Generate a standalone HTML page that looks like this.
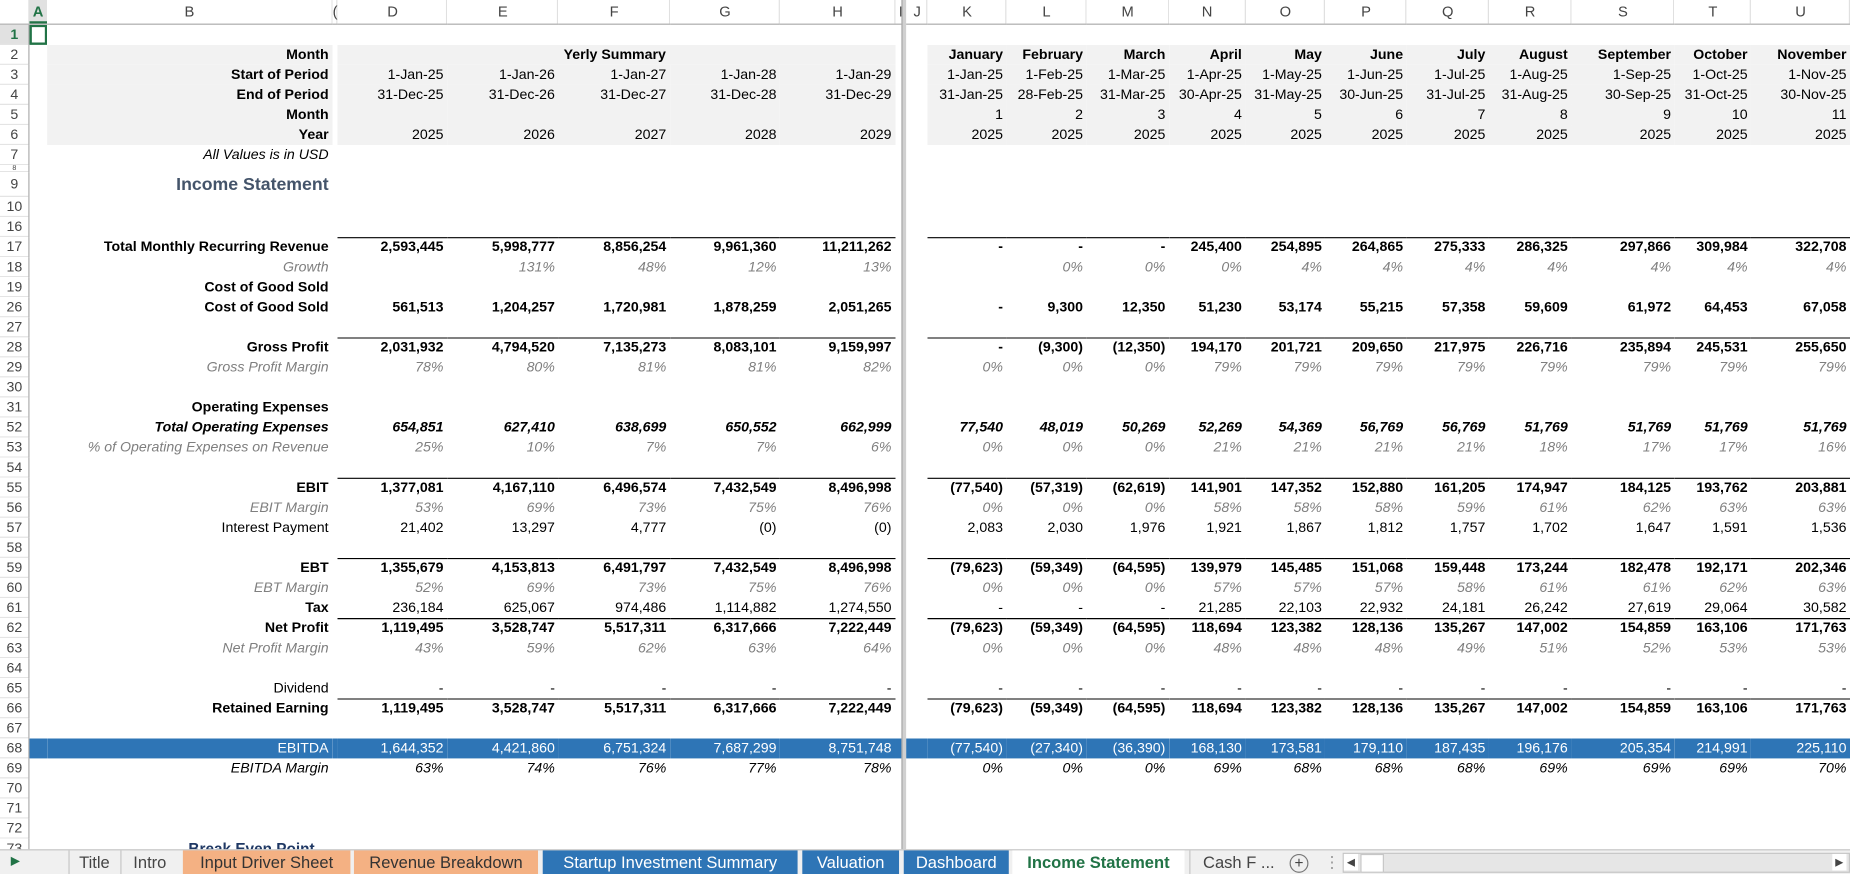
<!DOCTYPE html>
<html><head><meta charset="utf-8">
<style>
html,body{margin:0;padding:0;background:#fff;overflow:hidden;width:1850px;height:874px}
#w{position:relative;width:1568px;height:741px;overflow:hidden;transform:scale(1.17985,1.17949);transform-origin:0 0;font-family:"Liberation Sans",Arial,sans-serif;font-size:12px;color:#000}
table{border-collapse:collapse;table-layout:fixed;position:absolute;left:0;top:0}
td{padding:0 3px 0 0;text-align:right;white-space:nowrap;overflow:hidden;height:17px;line-height:17px}
td.rh{text-align:center;padding:0;color:#444;font-size:12px;border-right:1px solid #ababab;box-shadow:inset 0 -1px 0 #e4e4e4}
tr.hd td{height:20px;line-height:20px;text-align:center;padding:0;color:#444;font-size:12.5px;border-bottom:1px solid #ababab;box-shadow:inset -1px 0 0 #e0e0e0}
tr.hd td.sel{color:#217346;font-weight:bold;background:#e1e1e1;box-shadow:inset 0 -2px 0 #217346}
tr.sh td.s{background:#f2f2f2}
.b td.l,.b td.v{font-weight:bold}
.g td.l,.g td.v{color:#7f7f7f;font-style:italic}
.bi td.l,.bi td.v{font-weight:bold;font-style:italic}
.it td.l,.it td.v{font-style:italic}
.t td.v{box-shadow:inset 0 1px 0 #000}
.eb td.l,.eb td.v,.eb td.x{background:#2e75b6;color:#fff}
#fz{position:absolute;left:764px;top:0;width:3px;height:720px;background:#d0d0d0;border-left:1px solid #a8a8a8}
#tabs{position:absolute;left:0;top:720px;width:1568px;height:21px;background:#f0f0f0;border-top:1px solid #c6c6c6}
#tabs span{position:absolute;top:0;height:20px;line-height:20px;text-align:center;font-size:14px;color:#444}
.tb{background:#2e75b6;color:#fff!important}
.to{background:#f4b183;color:#333!important}
</style></head><body><div id="w">
<table>
<colgroup><col style="width:25px"><col style="width:15px"><col style="width:242px"><col style="width:5px"><col style="width:93px"><col style="width:95px"><col style="width:95px"><col style="width:94px"><col style="width:98px"><col style="width:10px"><col style="width:18px"><col style="width:67px"><col style="width:68px"><col style="width:70px"><col style="width:65px"><col style="width:68px"><col style="width:69px"><col style="width:70px"><col style="width:70px"><col style="width:88px"><col style="width:65px"><col style="width:84px"></colgroup>
<tr class="hd"><td style="background:#fff"></td><td class="sel">A</td><td>B</td><td>(</td><td>D</td><td>E</td><td>F</td><td>G</td><td>H</td><td>I</td><td>J</td><td>K</td><td>L</td><td>M</td><td>N</td><td>O</td><td>P</td><td>Q</td><td>R</td><td>S</td><td>T</td><td>U</td></tr>
<tr><td class="rh" style="background:#e1e1e1;color:#217346;font-weight:bold">1</td><td style="box-shadow:inset 0 0 0 2px #217346"></td><td></td><td></td><td></td><td></td><td></td><td></td><td></td><td></td><td></td><td></td><td></td><td></td><td></td><td></td><td></td><td></td><td></td><td></td><td></td><td></td></tr>
<tr class="sh b"><td class="rh">2</td><td></td><td class="s l">Month</td><td></td><td class="s" colspan="5" style="text-align:center;font-weight:bold">Yerly Summary</td><td></td><td></td><td class="s v">January</td><td class="s v">February</td><td class="s v">March</td><td class="s v">April</td><td class="s v">May</td><td class="s v">June</td><td class="s v">July</td><td class="s v">August</td><td class="s v">September</td><td class="s v">October</td><td class="s v">November</td></tr>
<tr class="sh"><td class="rh">3</td><td></td><td class="s" style="font-weight:bold">Start of Period</td><td></td><td class="s">1-Jan-25</td><td class="s">1-Jan-26</td><td class="s">1-Jan-27</td><td class="s">1-Jan-28</td><td class="s">1-Jan-29</td><td></td><td></td><td class="s">1-Jan-25</td><td class="s">1-Feb-25</td><td class="s">1-Mar-25</td><td class="s">1-Apr-25</td><td class="s">1-May-25</td><td class="s">1-Jun-25</td><td class="s">1-Jul-25</td><td class="s">1-Aug-25</td><td class="s">1-Sep-25</td><td class="s">1-Oct-25</td><td class="s">1-Nov-25</td></tr>
<tr class="sh"><td class="rh">4</td><td></td><td class="s" style="font-weight:bold">End of Period</td><td></td><td class="s">31-Dec-25</td><td class="s">31-Dec-26</td><td class="s">31-Dec-27</td><td class="s">31-Dec-28</td><td class="s">31-Dec-29</td><td></td><td></td><td class="s">31-Jan-25</td><td class="s">28-Feb-25</td><td class="s">31-Mar-25</td><td class="s">30-Apr-25</td><td class="s">31-May-25</td><td class="s">30-Jun-25</td><td class="s">31-Jul-25</td><td class="s">31-Aug-25</td><td class="s">30-Sep-25</td><td class="s">31-Oct-25</td><td class="s">30-Nov-25</td></tr>
<tr class="sh"><td class="rh">5</td><td></td><td class="s" style="font-weight:bold">Month</td><td></td><td class="s"></td><td class="s"></td><td class="s"></td><td class="s"></td><td class="s"></td><td></td><td></td><td class="s">1</td><td class="s">2</td><td class="s">3</td><td class="s">4</td><td class="s">5</td><td class="s">6</td><td class="s">7</td><td class="s">8</td><td class="s">9</td><td class="s">10</td><td class="s">11</td></tr>
<tr class="sh"><td class="rh">6</td><td></td><td class="s" style="font-weight:bold">Year</td><td></td><td class="s">2025</td><td class="s">2026</td><td class="s">2027</td><td class="s">2028</td><td class="s">2029</td><td></td><td></td><td class="s">2025</td><td class="s">2025</td><td class="s">2025</td><td class="s">2025</td><td class="s">2025</td><td class="s">2025</td><td class="s">2025</td><td class="s">2025</td><td class="s">2025</td><td class="s">2025</td><td class="s">2025</td></tr>
<tr><td class="rh">7</td><td></td><td style="font-style:italic">All Values is in USD</td><td colspan="19"></td></tr>
<tr><td class="rh" style="height:6px;line-height:6px;font-size:6px">8</td><td colspan="21" style="height:6px"></td></tr>
<tr><td class="rh" style="height:21px">9</td><td></td><td style="height:21px;font-weight:bold;font-size:15px;color:#44546a">Income Statement</td><td colspan="19"></td></tr>
<tr><td class="rh">10</td><td colspan="21"></td></tr>
<tr><td class="rh">16</td><td colspan="21"></td></tr>
<tr class="b t"><td class="rh">17</td><td></td><td class="l">Total Monthly Recurring Revenue</td><td></td><td class="v">2,593,445</td><td class="v">5,998,777</td><td class="v">8,856,254</td><td class="v">9,961,360</td><td class="v">11,211,262</td><td></td><td></td><td class="v">-</td><td class="v">-</td><td class="v">-</td><td class="v">245,400</td><td class="v">254,895</td><td class="v">264,865</td><td class="v">275,333</td><td class="v">286,325</td><td class="v">297,866</td><td class="v">309,984</td><td class="v">322,708</td></tr>
<tr class="g"><td class="rh">18</td><td></td><td class="l">Growth</td><td></td><td class="v"></td><td class="v">131%</td><td class="v">48%</td><td class="v">12%</td><td class="v">13%</td><td></td><td></td><td class="v"></td><td class="v">0%</td><td class="v">0%</td><td class="v">0%</td><td class="v">4%</td><td class="v">4%</td><td class="v">4%</td><td class="v">4%</td><td class="v">4%</td><td class="v">4%</td><td class="v">4%</td></tr>
<tr class="b"><td class="rh">19</td><td></td><td class="l">Cost of Good Sold</td><td colspan="19"></td></tr>
<tr class="b"><td class="rh">26</td><td></td><td class="l">Cost of Good Sold</td><td></td><td class="v">561,513</td><td class="v">1,204,257</td><td class="v">1,720,981</td><td class="v">1,878,259</td><td class="v">2,051,265</td><td></td><td></td><td class="v">-</td><td class="v">9,300</td><td class="v">12,350</td><td class="v">51,230</td><td class="v">53,174</td><td class="v">55,215</td><td class="v">57,358</td><td class="v">59,609</td><td class="v">61,972</td><td class="v">64,453</td><td class="v">67,058</td></tr>
<tr><td class="rh">27</td><td colspan="21"></td></tr>
<tr class="b t"><td class="rh">28</td><td></td><td class="l">Gross Profit</td><td></td><td class="v">2,031,932</td><td class="v">4,794,520</td><td class="v">7,135,273</td><td class="v">8,083,101</td><td class="v">9,159,997</td><td></td><td></td><td class="v">-</td><td class="v">(9,300)</td><td class="v">(12,350)</td><td class="v">194,170</td><td class="v">201,721</td><td class="v">209,650</td><td class="v">217,975</td><td class="v">226,716</td><td class="v">235,894</td><td class="v">245,531</td><td class="v">255,650</td></tr>
<tr class="g"><td class="rh">29</td><td></td><td class="l">Gross Profit Margin</td><td></td><td class="v">78%</td><td class="v">80%</td><td class="v">81%</td><td class="v">81%</td><td class="v">82%</td><td></td><td></td><td class="v">0%</td><td class="v">0%</td><td class="v">0%</td><td class="v">79%</td><td class="v">79%</td><td class="v">79%</td><td class="v">79%</td><td class="v">79%</td><td class="v">79%</td><td class="v">79%</td><td class="v">79%</td></tr>
<tr><td class="rh">30</td><td colspan="21"></td></tr>
<tr class="b"><td class="rh">31</td><td></td><td class="l">Operating Expenses</td><td colspan="19"></td></tr>
<tr class="bi"><td class="rh">52</td><td></td><td class="l">Total Operating Expenses</td><td></td><td class="v">654,851</td><td class="v">627,410</td><td class="v">638,699</td><td class="v">650,552</td><td class="v">662,999</td><td></td><td></td><td class="v">77,540</td><td class="v">48,019</td><td class="v">50,269</td><td class="v">52,269</td><td class="v">54,369</td><td class="v">56,769</td><td class="v">56,769</td><td class="v">51,769</td><td class="v">51,769</td><td class="v">51,769</td><td class="v">51,769</td></tr>
<tr class="g"><td class="rh">53</td><td></td><td class="l">% of Operating Expenses on Revenue</td><td></td><td class="v">25%</td><td class="v">10%</td><td class="v">7%</td><td class="v">7%</td><td class="v">6%</td><td></td><td></td><td class="v">0%</td><td class="v">0%</td><td class="v">0%</td><td class="v">21%</td><td class="v">21%</td><td class="v">21%</td><td class="v">21%</td><td class="v">18%</td><td class="v">17%</td><td class="v">17%</td><td class="v">16%</td></tr>
<tr><td class="rh">54</td><td colspan="21"></td></tr>
<tr class="b t"><td class="rh">55</td><td></td><td class="l">EBIT</td><td></td><td class="v">1,377,081</td><td class="v">4,167,110</td><td class="v">6,496,574</td><td class="v">7,432,549</td><td class="v">8,496,998</td><td></td><td></td><td class="v">(77,540)</td><td class="v">(57,319)</td><td class="v">(62,619)</td><td class="v">141,901</td><td class="v">147,352</td><td class="v">152,880</td><td class="v">161,205</td><td class="v">174,947</td><td class="v">184,125</td><td class="v">193,762</td><td class="v">203,881</td></tr>
<tr class="g"><td class="rh">56</td><td></td><td class="l">EBIT Margin</td><td></td><td class="v">53%</td><td class="v">69%</td><td class="v">73%</td><td class="v">75%</td><td class="v">76%</td><td></td><td></td><td class="v">0%</td><td class="v">0%</td><td class="v">0%</td><td class="v">58%</td><td class="v">58%</td><td class="v">58%</td><td class="v">59%</td><td class="v">61%</td><td class="v">62%</td><td class="v">63%</td><td class="v">63%</td></tr>
<tr><td class="rh">57</td><td></td><td class="l">Interest Payment</td><td></td><td class="v">21,402</td><td class="v">13,297</td><td class="v">4,777</td><td class="v">(0)</td><td class="v">(0)</td><td></td><td></td><td class="v">2,083</td><td class="v">2,030</td><td class="v">1,976</td><td class="v">1,921</td><td class="v">1,867</td><td class="v">1,812</td><td class="v">1,757</td><td class="v">1,702</td><td class="v">1,647</td><td class="v">1,591</td><td class="v">1,536</td></tr>
<tr><td class="rh">58</td><td colspan="21"></td></tr>
<tr class="b t"><td class="rh">59</td><td></td><td class="l">EBT</td><td></td><td class="v">1,355,679</td><td class="v">4,153,813</td><td class="v">6,491,797</td><td class="v">7,432,549</td><td class="v">8,496,998</td><td></td><td></td><td class="v">(79,623)</td><td class="v">(59,349)</td><td class="v">(64,595)</td><td class="v">139,979</td><td class="v">145,485</td><td class="v">151,068</td><td class="v">159,448</td><td class="v">173,244</td><td class="v">182,478</td><td class="v">192,171</td><td class="v">202,346</td></tr>
<tr class="g"><td class="rh">60</td><td></td><td class="l">EBT Margin</td><td></td><td class="v">52%</td><td class="v">69%</td><td class="v">73%</td><td class="v">75%</td><td class="v">76%</td><td></td><td></td><td class="v">0%</td><td class="v">0%</td><td class="v">0%</td><td class="v">57%</td><td class="v">57%</td><td class="v">57%</td><td class="v">58%</td><td class="v">61%</td><td class="v">61%</td><td class="v">62%</td><td class="v">63%</td></tr>
<tr><td class="rh">61</td><td></td><td class="l" style="font-weight:bold">Tax</td><td></td><td class="v">236,184</td><td class="v">625,067</td><td class="v">974,486</td><td class="v">1,114,882</td><td class="v">1,274,550</td><td></td><td></td><td class="v">-</td><td class="v">-</td><td class="v">-</td><td class="v">21,285</td><td class="v">22,103</td><td class="v">22,932</td><td class="v">24,181</td><td class="v">26,242</td><td class="v">27,619</td><td class="v">29,064</td><td class="v">30,582</td></tr>
<tr class="b t"><td class="rh">62</td><td></td><td class="l">Net Profit</td><td></td><td class="v">1,119,495</td><td class="v">3,528,747</td><td class="v">5,517,311</td><td class="v">6,317,666</td><td class="v">7,222,449</td><td></td><td></td><td class="v">(79,623)</td><td class="v">(59,349)</td><td class="v">(64,595)</td><td class="v">118,694</td><td class="v">123,382</td><td class="v">128,136</td><td class="v">135,267</td><td class="v">147,002</td><td class="v">154,859</td><td class="v">163,106</td><td class="v">171,763</td></tr>
<tr class="g"><td class="rh">63</td><td></td><td class="l">Net Profit Margin</td><td></td><td class="v">43%</td><td class="v">59%</td><td class="v">62%</td><td class="v">63%</td><td class="v">64%</td><td></td><td></td><td class="v">0%</td><td class="v">0%</td><td class="v">0%</td><td class="v">48%</td><td class="v">48%</td><td class="v">48%</td><td class="v">49%</td><td class="v">51%</td><td class="v">52%</td><td class="v">53%</td><td class="v">53%</td></tr>
<tr><td class="rh">64</td><td colspan="21"></td></tr>
<tr><td class="rh">65</td><td></td><td class="l">Dividend</td><td></td><td class="v">-</td><td class="v">-</td><td class="v">-</td><td class="v">-</td><td class="v">-</td><td></td><td></td><td class="v">-</td><td class="v">-</td><td class="v">-</td><td class="v">-</td><td class="v">-</td><td class="v">-</td><td class="v">-</td><td class="v">-</td><td class="v">-</td><td class="v">-</td><td class="v">-</td></tr>
<tr class="b t"><td class="rh">66</td><td></td><td class="l">Retained Earning</td><td></td><td class="v">1,119,495</td><td class="v">3,528,747</td><td class="v">5,517,311</td><td class="v">6,317,666</td><td class="v">7,222,449</td><td></td><td></td><td class="v">(79,623)</td><td class="v">(59,349)</td><td class="v">(64,595)</td><td class="v">118,694</td><td class="v">123,382</td><td class="v">128,136</td><td class="v">135,267</td><td class="v">147,002</td><td class="v">154,859</td><td class="v">163,106</td><td class="v">171,763</td></tr>
<tr><td class="rh">67</td><td colspan="21"></td></tr>
<tr class="eb"><td class="rh">68</td><td class="x"></td><td class="l">EBITDA</td><td class="x"></td><td class="v">1,644,352</td><td class="v">4,421,860</td><td class="v">6,751,324</td><td class="v">7,687,299</td><td class="v">8,751,748</td><td class="x"></td><td class="x"></td><td class="v">(77,540)</td><td class="v">(27,340)</td><td class="v">(36,390)</td><td class="v">168,130</td><td class="v">173,581</td><td class="v">179,110</td><td class="v">187,435</td><td class="v">196,176</td><td class="v">205,354</td><td class="v">214,991</td><td class="v">225,110</td></tr>
<tr class="it"><td class="rh">69</td><td></td><td class="l">EBITDA Margin</td><td></td><td class="v">63%</td><td class="v">74%</td><td class="v">76%</td><td class="v">77%</td><td class="v">78%</td><td></td><td></td><td class="v">0%</td><td class="v">0%</td><td class="v">0%</td><td class="v">69%</td><td class="v">68%</td><td class="v">68%</td><td class="v">68%</td><td class="v">69%</td><td class="v">69%</td><td class="v">69%</td><td class="v">70%</td></tr>
<tr><td class="rh">70</td><td colspan="21"></td></tr>
<tr><td class="rh">71</td><td colspan="21"></td></tr>
<tr><td class="rh">72</td><td colspan="21"></td></tr>
<tr><td class="rh">73</td><td></td><td style="text-align:left;padding-left:120px;font-weight:bold;font-size:13px;color:#1f3864">Break Even Point</td><td colspan="19"></td></tr>
</table>
<div id="fz"></div>
<div id="tabs">
<span style="left:6px;width:14px;color:#217346;font-size:10px">&#9654;</span>
<span style="left:58px;width:42px;border-left:1px solid #c6c6c6">Title</span>
<span style="left:102px;width:48px;border-left:1px solid #c6c6c6">Intro</span>
<span class="to" style="left:155px;width:142px">Input Driver Sheet</span>
<span class="to" style="left:300px;width:156px">Revenue Breakdown</span>
<span class="tb" style="left:460px;width:216px">Startup Investment Summary</span>
<span class="tb" style="left:680px;width:82px">Valuation</span>
<span class="tb" style="left:766px;width:89px">Dashboard</span>
<span style="left:858px;width:146px;background:#fff;color:#217346!important;font-weight:bold">Income Statement</span>
<span style="left:1008px;width:82px;border-left:1px solid #c6c6c6">Cash F ...</span>
<span style="left:1093px;top:3px;width:14px;height:14px;line-height:13px;border:1px solid #777;border-radius:50%;font-size:13px">+</span>
<span style="left:1122px;width:6px;color:#999">&#8942;</span>
<span style="left:1138px;top:2px;width:428px;height:15px;background:#e6e6e6;border:1px solid #c6c6c6"></span>
<span style="left:1139px;top:3px;width:12px;height:14px;line-height:14px;background:#fff;font-size:9px">&#9664;</span>
<span style="left:1153px;top:3px;width:18px;height:14px;background:#fff;border:1px solid #c6c6c6"></span>
<span style="left:1553px;top:3px;width:12px;height:14px;line-height:14px;background:#fff;font-size:9px">&#9654;</span>
</div>
</div></body></html>
